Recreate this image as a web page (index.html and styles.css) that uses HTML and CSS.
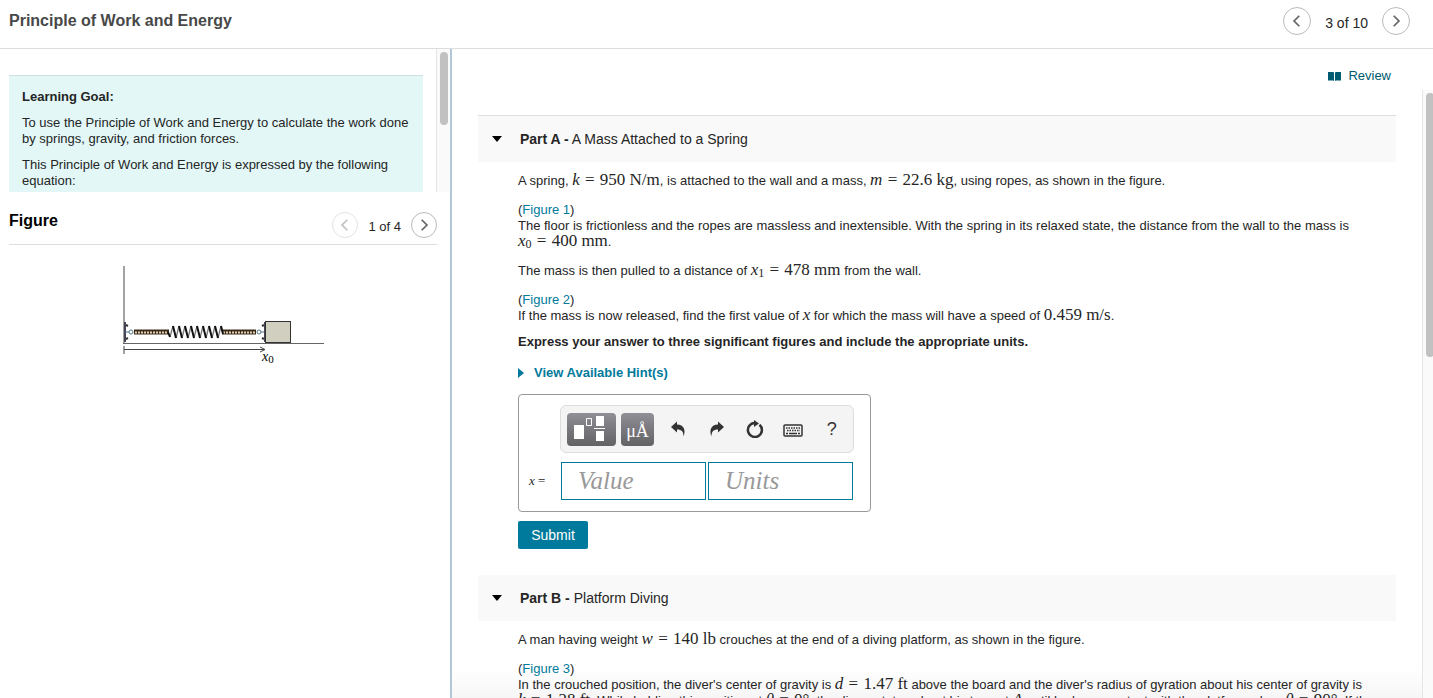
FILE: index.html
```html
<!DOCTYPE html>
<html lang="en">
<head>
  <meta charset="UTF-8">
  <title>Principle of Work and Energy</title>
  <link rel="stylesheet" href="styles.css">
</head>
<body>
  <header class="topbar">
    <h1>Principle of Work and Energy</h1>
    <nav class="pager">
      <button type="button" class="round" aria-label="Previous item"><svg viewBox="0 0 12 12"><path d="M8 1.500 3.500 6 8 10.500"/></svg></button>
      <span>3 of 10</span>
      <button type="button" class="round" aria-label="Next item"><svg viewBox="0 0 12 12"><path d="M4 1.500 8.500 6 4 10.500"/></svg></button>
    </nav>
  </header>

  <div class="columns">
    <aside class="left">
      <div class="goal-scroll">
        <section class="goal">
          <h2>Learning Goal:</h2>
          <p>To use the Principle of Work and Energy to calculate the work done by springs, gravity, and friction forces.</p>
          <p>This Principle of Work and Energy is expressed by the following equation:</p>
        </section>
        <div class="track"><div class="thumb"></div></div>
      </div>

      <section class="figure">
        <div class="figure-head">
          <h2>Figure</h2>
          <nav class="pager small">
            <button type="button" class="round" aria-label="Previous figure" disabled><svg viewBox="0 0 12 12"><path d="M8 1.500 3.500 6 8 10.500"/></svg></button>
            <span>1 of 4</span>
            <button type="button" class="round" aria-label="Next figure"><svg viewBox="0 0 12 12"><path d="M4 1.500 8.500 6 4 10.500"/></svg></button>
          </nav>
        </div>
        <svg class="drawing" width="202" height="102" viewBox="0 0 202 102">
          <!-- wall and floor -->
          <path d="M1 0v77M0 77.500h201" stroke="#666" stroke-width="1.200" fill="none"/>
          <path d="M2 56v20" stroke="#445" stroke-width="2"/>
          <path d="M3 59l2 1M3 73l2-1M141 59l-2 1M141 73l-2-1" stroke="#333" stroke-width="2"/>
          <!-- ropes -->
          <path d="M11 66h35M99 66h34" stroke="#3a2b1c" stroke-width="5"/>
          <path d="M12 66.500h33M100 66.500h32" stroke="#e6cfae" stroke-width="2" stroke-dasharray="2 1"/>
          <!-- hooks -->
          <g fill="none" stroke="#517383"><path d="M2 66h4"/><circle cx="8" cy="66" r="2"/><circle cx="136" cy="66" r="2"/><path d="M138 66h4"/></g>
          <path d="M141.500 56v20" stroke="#445"/>
          <!-- spring -->
          <path d="M47 71l3-11M53 72l3-12M59 72l3-12M65 72l3-12M71 72l3-12M77 72l3-12M83 72l3-12M89 72l3-12M95 72l3-12" stroke="#777" stroke-width="1.300"/>
          <path d="M50 60l3 12M56 60l3 12M62 60l3 12M68 60l3 12M74 60l3 12M80 60l3 12M86 60l3 12M92 60l3 12M45 66l2 5M98 60l2 8" stroke="#111" stroke-width="2"/>
          <rect x="142.500" y="55.500" width="25" height="21" fill="#d1cfbf" stroke="#333"/>
          <!-- distance arrow -->
          <path d="M1 80v8M1 83.500h140M137 81l5 2.500-5 2.500" fill="none" stroke="#444"/>
          <text x="139" y="95" class="axis">x<tspan class="axis-sub" dy="2">0</tspan></text>
        </svg>
      </section>
    </aside>

    <main class="right">
      <div class="content">
        <a href="#" class="review"><svg width="13" height="9" viewBox="0 0 13 9"><path d="M0 0h5l1 .5V9L5 8.500H0zM13 0H8L7 .5V9l1-.5h5z" fill="#005a70"/></svg>Review</a>

        <section class="part first">
          <h2 class="part-head"><svg width="10" height="6" viewBox="0 0 10 6"><path d="M0 0h10L5 6z"/></svg><span><b>Part A -</b> A Mass Attached to a Spring</span></h2>
          <div class="part-body">
            <p>A spring, <span class="math"><i>k</i> <span class="eq">=</span> 950 N/m</span>, is attached to the wall and a mass, <span class="math"><i>m</i> <span class="eq">=</span> 22.6 kg</span>, using ropes, as shown in the figure.</p>
            <p>(<a href="#">Figure 1</a>)<br>The floor is frictionless and the ropes are massless and inextensible. With the spring in its relaxed state, the distance from the wall to the mass is <span class="math"><i>x</i><sub>0</sub> <span class="eq">=</span> 400 mm</span>.</p>
            <p>The mass is then pulled to a distance of <span class="math"><i>x</i><sub>1</sub> <span class="eq">=</span> 478 mm</span> from the wall.</p>
            <p class="question">(<a href="#">Figure 2</a>)<br>If the mass is now released, find the first value of <span class="math"><i>x</i></span> for which the mass will have a speed of <span class="math">0.459 m/s</span>.</p>
            <p class="instructions">Express your answer to three significant figures and include the appropriate units.</p>
            <a href="#" class="hints"><svg width="6" height="10" viewBox="0 0 6 10"><path d="M0 0l6 5-6 5z"/></svg>View Available Hint(s)</a>

            <form class="answer-form">
              <div class="answer">
                <div class="toolbar">
                  <button type="button" class="dark wide" aria-label="Templates">
                    <svg width="49" height="33" viewBox="0 0 49 33"><path d="M7 12h10v14H7zM29 3h8v10h-8zM27 15h11v1H27zM29 18h8v10h-8z" fill="#fff"/><path d="M19.500 5.500h5v7h-5z" fill="none" stroke="#fff"/></svg>
                  </button>
                  <button type="button" class="dark">μÅ</button>
                  <div class="tools">
                    <button type="button" class="tool" aria-label="Undo"><svg width="16" height="16" viewBox="0 0 16 16"><path d="M1 6l6-5.500v3c7 0 9 6 6.500 12C13.500 11 12 8.500 7 8.500v3z"/></svg></button>
                    <button type="button" class="tool" aria-label="Redo"><svg width="16" height="16" viewBox="0 0 16 16"><path d="M15 6L9 .5v3c-7 0-9 6-6.500 12C2.500 11 4 8.500 9 8.500v3z"/></svg></button>
                    <button type="button" class="tool" aria-label="Reset"><svg width="18" height="18" viewBox="0 0 18 18"><path d="M13.500 4.700A7 7 0 1 1 8.500 3" fill="none" stroke="#333" stroke-width="2.500"/><path d="M8 0l5 3.500L8 7z"/></svg></button>
                    <button type="button" class="tool" aria-label="Keyboard"><svg width="20" height="18" viewBox="0 0 20 18"><rect x="1" y="5" width="18" height="11" rx="1" fill="none" stroke="#333" stroke-width="1.500"/><path d="M3 8h14M4 10.500h13" stroke="#333" stroke-width="1.500" stroke-dasharray="1.500 1"/><path d="M3 13.500h2M6 13.500h8M15 13.500h2" stroke="#333" stroke-width="1.500"/></svg></button>
                    <button type="button" class="tool help">?</button>
                  </div>
                </div>
                <label for="value"><i>x</i> =</label>
                <div class="fields">
                  <input type="text" id="value" placeholder="Value">
                  <input type="text" id="units" placeholder="Units" aria-label="Units">
                </div>
              </div>
              <button type="submit" class="submit">Submit</button>
            </form>
          </div>
        </section>

        <section class="part">
          <h2 class="part-head"><svg width="10" height="6" viewBox="0 0 10 6"><path d="M0 0h10L5 6z"/></svg><span><b>Part B -</b> Platform Diving</span></h2>
          <div class="part-body">
            <p>A man having weight <span class="math"><i>w</i> <span class="eq">=</span> 140 lb</span> crouches at the end of a diving platform, as shown in the figure.</p>
            <p>(<a href="#">Figure 3</a>)<br>In the crouched position, the diver's center of gravity is <span class="math"><i>d</i> <span class="eq">=</span> 1.47 ft</span> above the board and the diver's radius of gyration about his center of gravity is <span class="math"><i>k</i> <span class="eq">=</span> 1.28 ft</span>. While holding this position at <span class="math"><i>θ</i> <span class="eq">=</span> 0°</span>, the diver rotates about his toes at <span class="math"><i>A</i></span> until he loses contact with the platform when <span class="math"><i>θ</i> <span class="eq">=</span> 90°</span>. If the</p>
          </div>
        </section>
      </div>
      <div class="track page-track"><div class="thumb"></div></div>
    </main>
  </div>
</body>
</html>
```
FILE: styles.css
```css
* {
  box-sizing: border-box;
}

body {
  margin: 0;
  height: 100vh;
  overflow: hidden;
  display: flex;
  flex-direction: column;
  font: 13px/16px "Liberation Sans", Arial, sans-serif;
  color: #252525;
  background: #fff;
}

h1, h2, p {
  margin: 0;
}

a {
  color: #007a9c;
  text-decoration: none;
}

button {
  padding: 0;
  font-family: inherit;
}

.topbar {
  flex: none;
  display: flex;
  justify-content: space-between;
  height: 49px;
  padding: 7px 23px 0 9px;
  border-bottom: 1px solid #ddd;
}

.topbar h1 {
  font-size: 16px;
  line-height: 28px;
  color: #484848;
}

.pager {
  display: flex;
  gap: 14px;
  height: 28px;
  font-size: 14px;
  line-height: 32px;
}

.round {
  display: flex;
  align-items: center;
  justify-content: center;
  width: 28px;
  height: 28px;
  border: 1px solid #bbb;
  border-radius: 50%;
  background: #fff;
}

.round svg {
  width: 14px;
  height: 14px;
  fill: none;
  stroke: #666;
  stroke-width: 1.5;
}

.round:disabled {
  opacity: 0.4;
}

.small {
  gap: 10px;
  font-size: 13px;
  line-height: 30px;
}

.small .round {
  width: 26px;
  height: 26px;
}

.columns {
  flex: 1;
  display: flex;
  min-height: 0;
}

.left {
  flex: none;
  width: 452px;
  border-right: 2px solid #b3c7da;
}

.goal-scroll {
  display: flex;
  justify-content: space-between;
  height: 143px;
  padding-left: 9px;
  overflow: hidden;
}

.goal {
  width: 414px;
  height: 160px;
  margin-top: 26px;
  padding: 13px;
  border-top: 1px solid #d5dede;
  background: #e2f7f6;
}

.goal h2 {
  font-size: 13px;
  line-height: 16px;
}

.goal p {
  margin-top: 10px;
}

.track {
  width: 14px;
  padding: 3px 2px 0 3px;
  border-left: 1px solid #e5e5e5;
  background: #fafafa;
}

.thumb {
  width: 8px;
  height: 73px;
  border-radius: 4px;
  background: #c1c1c1;
}

.figure {
  padding: 20px 13px 0 9px;
}

.figure-head {
  display: flex;
  justify-content: space-between;
  height: 33px;
  border-bottom: 1px solid #ddd;
}

.figure-head h2 {
  font-size: 16px;
  line-height: 18px;
  color: #000;
}

.drawing {
  display: block;
  margin: 21px 0 0 114px;
}

.axis {
  font: italic 14px "Liberation Serif", serif;
}

.axis-sub {
  font-size: 11px;
  font-style: normal;
}

.right {
  flex: 1;
  display: flex;
  justify-content: space-between;
  min-width: 0;
  background: linear-gradient(to top, #f6f6f6, #fff 30px);
}

.content {
  flex: 1;
  padding: 19px 26px 0;
}

.review {
  display: flex;
  align-items: center;
  justify-content: flex-end;
  gap: 7px;
  height: 16px;
  margin: 0 5px 31px 0;
  color: #005a70;
}

.part-head {
  display: flex;
  align-items: center;
  gap: 18px;
  height: 46px;
  padding: 0 14px;
  background: #f9f9f9;
  font-size: 14px;
  font-weight: normal;
}

.first .part-head {
  height: 47px;
  border-top: 1px solid #ddd;
}

.part-body {
  padding: 11px 0 26px 40px;
}

.part-body p {
  margin-bottom: 13px;
}

.math {
  font: 17px/0 "Liberation Serif", serif;
  white-space: nowrap;
}

.math sub {
  font-size: 12px;
  vertical-align: -2px;
}

.eq {
  margin: 0 1px;
}

.part-body .question {
  margin-bottom: 10px;
}

.part-body .instructions {
  margin-bottom: 15px;
  font-weight: bold;
}

.hints {
  display: flex;
  align-items: center;
  gap: 10px;
  font-weight: bold;
  margin-bottom: 13px;
}

.hints svg {
  fill: #007a9c;
}

.answer {
  display: grid;
  grid-template-columns: 31px 294px;
  row-gap: 9px;
  align-items: center;
  align-content: start;
  width: 353px;
  height: 118px;
  padding: 10px;
  border: 1px solid #999;
  border-radius: 4px;
}

.answer label {
  font: 13px/16px "Liberation Serif", serif;
}

.toolbar {
  grid-column: 2;
  display: flex;
  align-items: center;
  gap: 5px;
  height: 48px;
  padding: 0 2px 0 6px;
  border: 1px solid #ddd;
  border-radius: 6px;
  background: #f4f4f4;
}

.dark {
  flex: none;
  width: 33px;
  height: 33px;
  border: 0;
  border-radius: 4px;
  background: linear-gradient(#918e97, #626264);
  color: #fff;
  font: 18px/36px "Liberation Serif", serif;
}

.wide {
  width: 49px;
}

.tools {
  flex: 1;
  display: flex;
}

.tool {
  flex: 1;
  display: flex;
  align-items: center;
  justify-content: center;
  height: 33px;
  border: 0;
  background: none;
  color: #333;
}

.tool svg {
  fill: #333;
}

.help {
  font-size: 18px;
}

.fields {
  display: flex;
  gap: 2px;
  padding: 0 1px;
}

.fields input {
  flex: 1;
  min-width: 0;
  height: 38px;
  padding: 0 16px;
  border: 1px solid #007a9c;
  font: 25px "Liberation Serif", serif;
}

.fields input::placeholder {
  font-style: italic;
  color: #999;
}

.submit {
  width: 70px;
  height: 28px;
  margin-top: 9px;
  border: 0;
  border-radius: 2px;
  background: #007a9c;
  color: #fff;
  font-size: 14px;
}

.page-track {
  width: 11px;
  margin-top: 41px;
}

.page-track .thumb {
  height: 264px;
}
```
